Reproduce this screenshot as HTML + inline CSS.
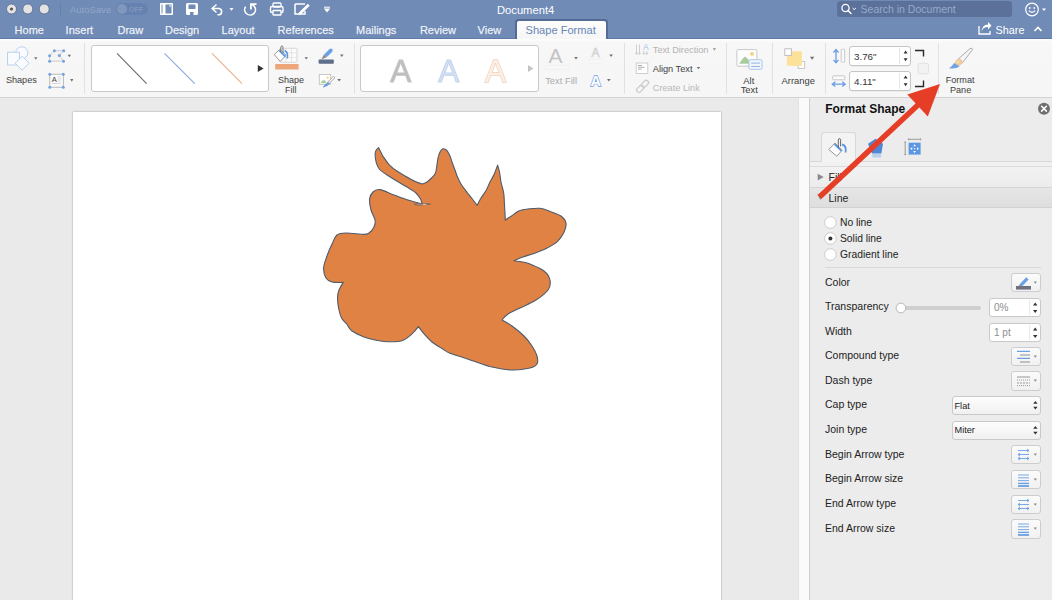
<!DOCTYPE html>
<html><head><meta charset="utf-8"><style>
html,body{margin:0;padding:0;width:1052px;height:600px;overflow:hidden;background:#fff}
body{position:relative;font-family:'Liberation Sans', sans-serif}
.t{position:absolute;white-space:nowrap;line-height:1;font-family:'Liberation Sans', sans-serif}
svg{overflow:visible}
</style></head><body>
<div style="position:absolute;left:0px;top:0px;width:1052px;height:39px;background:#708bb6"></div>
<div style="position:absolute;left:0px;top:38px;width:1052px;height:1px;background:#5f7aa6"></div>
<svg style="position:absolute;left:0;top:0" width="60" height="20">
<circle cx="11.5" cy="9" r="5" fill="#e3e3e3" stroke="#55698d" stroke-width="0.8"/>
<circle cx="11.5" cy="9" r="1.6" fill="#555"/>
<circle cx="27.8" cy="9" r="5" fill="#e3e3e3" stroke="#55698d" stroke-width="0.8"/>
<circle cx="44.2" cy="9" r="5" fill="#e3e3e3" stroke="#55698d" stroke-width="0.8"/>
</svg>
<div style="position:absolute;left:60px;top:3px;width:1px;height:12px;background:#647fab"></div>
<div class="t" style="left:70px;top:4.76px;font-size:9.5px;color:#93a7c8;font-weight:normal;">AutoSave</div>
<div style="position:absolute;left:116px;top:3px;width:32px;height:12px;background:#6682b0;border-radius:6px"></div>
<svg style="position:absolute;left:116px;top:3px" width="32" height="12"><circle cx="6" cy="6" r="5" fill="#8197bd"/><text x="13" y="9" font-family="Liberation Sans" font-weight="bold" font-size="7" fill="#8197bd">OFF</text></svg>
<svg style="position:absolute;left:150px;top:0" width="190" height="20">
<rect x="10" y="3" width="13" height="12" rx="1" fill="#fff"/>
<rect x="15.5" y="4.5" width="6" height="9" fill="#708bb6"/>
<path d="M19.5 4.5 L21.5 6.5 L19.5 6.5 Z" fill="#fff"/>
<rect x="11.5" y="4.5" width="1" height="9" fill="#708bb6"/>
<rect x="36" y="3" width="12" height="12" rx="1.5" fill="#fff"/>
<rect x="38.5" y="4.5" width="7" height="4.5" fill="#708bb6"/>
<rect x="40" y="12" width="3.5" height="3" fill="#708bb6"/>
<path d="M66 5 L62 8.5 L66 12 M62.5 8.5 H69 A3.2 3.2 0 0 1 69 14.8 H68" fill="none" stroke="#fff" stroke-width="1.6" stroke-linecap="round" stroke-linejoin="round"/>
<path d="M79.5 8 L83.5 8 L81.5 10.7 Z" fill="#fff"/>
<path d="M95.6 6.6 A5.4 5.4 0 1 0 104.4 6.4 L101.8 4.6" fill="none" stroke="#fff" stroke-width="1.6"/>
<path d="M106.5 4.2 H100.9 V9.6" fill="none" stroke="#fff" stroke-width="1.8"/>
<rect x="123" y="3" width="8" height="4" rx="1" fill="none" stroke="#fff" stroke-width="1.3"/>
<rect x="120.5" y="6.5" width="12.5" height="6" rx="1.5" fill="none" stroke="#fff" stroke-width="1.4"/>
<rect x="123" y="10.5" width="8" height="4.5" rx="0.5" fill="#708bb6" stroke="#fff" stroke-width="1.3"/>
<path d="M145 4 H155 M145 4 V14 H155 V11" fill="none" stroke="#fff" stroke-width="1.5"/>
<path d="M158.5 4.5 L150 13 L149 14.5 L150.5 13.5 L159 5" fill="none" stroke="#fff" stroke-width="2"/>
<rect x="174" y="6.7" width="6" height="1" fill="#fff"/>
<path d="M173.8 8.6 L180.2 8.6 L177 12.4 Z" fill="#fff"/>
</svg>
<div class="t" style="left:497px;top:4.54px;font-size:11.2px;color:#fff;font-weight:normal;">Document4</div>
<div class="t" style="left:14.6px;top:24.57px;font-size:11px;color:#f2f5fa;font-weight:normal;-webkit-text-stroke:0.25px rgba(242,245,250,.7)">Home</div>
<div class="t" style="left:65.6px;top:24.57px;font-size:11px;color:#f2f5fa;font-weight:normal;-webkit-text-stroke:0.25px rgba(242,245,250,.7)">Insert</div>
<div class="t" style="left:117.5px;top:24.57px;font-size:11px;color:#f2f5fa;font-weight:normal;-webkit-text-stroke:0.25px rgba(242,245,250,.7)">Draw</div>
<div class="t" style="left:165px;top:24.57px;font-size:11px;color:#f2f5fa;font-weight:normal;-webkit-text-stroke:0.25px rgba(242,245,250,.7)">Design</div>
<div class="t" style="left:221.6px;top:24.57px;font-size:11px;color:#f2f5fa;font-weight:normal;-webkit-text-stroke:0.25px rgba(242,245,250,.7)">Layout</div>
<div class="t" style="left:277.6px;top:24.57px;font-size:11px;color:#f2f5fa;font-weight:normal;-webkit-text-stroke:0.25px rgba(242,245,250,.7)">References</div>
<div class="t" style="left:356px;top:24.57px;font-size:11px;color:#f2f5fa;font-weight:normal;-webkit-text-stroke:0.25px rgba(242,245,250,.7)">Mailings</div>
<div class="t" style="left:419.9px;top:24.57px;font-size:11px;color:#f2f5fa;font-weight:normal;-webkit-text-stroke:0.25px rgba(242,245,250,.7)">Review</div>
<div class="t" style="left:477.6px;top:24.57px;font-size:11px;color:#f2f5fa;font-weight:normal;-webkit-text-stroke:0.25px rgba(242,245,250,.7)">View</div>
<div style="position:absolute;left:515px;top:19.4px;width:92.8px;height:19.6px;background:#536b95;border-radius:3.5px 3.5px 0 0"></div>
<div style="position:absolute;left:516.8px;top:21px;width:89px;height:18px;background:linear-gradient(#fdfdfd,#f6f6f6);border-radius:2px 2px 0 0"></div>
<div class="t" style="left:525.5px;top:24.56px;font-size:11.1px;color:#6886b6;font-weight:normal;">Shape Format</div>
<div style="position:absolute;left:837.3px;top:1.2px;width:175.2px;height:15.6px;background:#5b7199;border-radius:3.5px"></div>
<svg style="position:absolute;left:836px;top:0" width="30" height="20"><circle cx="9.5" cy="8" r="3.6" fill="none" stroke="#fff" stroke-width="1.3"/><path d="M12 10.5 L15 13.5" stroke="#fff" stroke-width="1.5" stroke-linecap="round"/><path d="M16.5 8 L18.2 9.6 L19.9 8" fill="none" stroke="#fff" stroke-width="1"/></svg>
<div class="t" style="left:860.6px;top:4.13px;font-size:10.5px;color:#98aacb;font-weight:normal;">Search in Document</div>
<svg style="position:absolute;left:1020px;top:0" width="32" height="20"><circle cx="12" cy="9.5" r="6.3" fill="none" stroke="#fff" stroke-width="1.2"/><circle cx="9.8" cy="8" r="0.9" fill="#fff"/><circle cx="14.2" cy="8" r="0.9" fill="#fff"/><path d="M8.8 10.7 Q12 14 15.2 10.7" fill="none" stroke="#fff" stroke-width="1.1"/><path d="M22 8.5 L26 8.5 L24 11 Z" fill="#fff"/></svg>
<svg style="position:absolute;left:970px;top:18px" width="82" height="20"><path d="M9 8 V16 H20 V13" fill="none" stroke="#fff" stroke-width="1.3"/><path d="M11.5 14 Q12.5 9 18 9 V11.5 L21.5 7.5 L18 4 V6.5 Q12 6.5 11.5 14 Z" fill="#fff"/><path d="M64.5 13 L68 9.5 L71.5 13" fill="none" stroke="#fff" stroke-width="1.6"/></svg>
<div class="t" style="left:995.6px;top:25.10px;font-size:10.8px;color:#fff;font-weight:normal;">Share</div>
<div style="position:absolute;left:0px;top:39px;width:1052px;height:58px;background:linear-gradient(#fefefe 0,#f7f7f7 3px,#f6f6f6)"></div>
<div style="position:absolute;left:0px;top:97px;width:1052px;height:1px;background:#d3d3d3"></div>
<div style="position:absolute;left:84px;top:43px;width:1px;height:51px;background:#e1e1e1"></div>
<div style="position:absolute;left:353.8px;top:43px;width:1px;height:51px;background:#e1e1e1"></div>
<div style="position:absolute;left:623.6px;top:43px;width:1px;height:51px;background:#e1e1e1"></div>
<div style="position:absolute;left:726.4px;top:43px;width:1px;height:51px;background:#e1e1e1"></div>
<div style="position:absolute;left:772px;top:43px;width:1px;height:51px;background:#e1e1e1"></div>
<div style="position:absolute;left:824.9px;top:43px;width:1px;height:51px;background:#e1e1e1"></div>
<div style="position:absolute;left:937.6px;top:43px;width:1px;height:51px;background:#e1e1e1"></div>
<svg style="position:absolute;left:0;top:42px" width="84" height="54">
<circle cx="21.8" cy="10.8" r="6" fill="#f9fbfe" stroke="#b3cbec" stroke-width="0.9"/>
<rect x="7.6" y="10.2" width="11.9" height="12.8" fill="#f9fbfe" stroke="#b3cbec" stroke-width="0.9"/>
<path d="M22.1 14.2 L29.1 21.2 L22.1 28.2 L15.1 21.2 Z" fill="#f9fbfe" stroke="#b3cbec" stroke-width="0.9"/>
<path d="M34.2 15.2 L37.4 15.2 L35.8 17.8 Z" fill="#707070"/>
<path d="M49.6 13.7 L54.4 8.7 L63.7 8.7 L59.4 13.4 L63.5 19.2 L49.6 19.2 Z" fill="#f4f4f4" stroke="#c4c4c4" stroke-width="0.8"/>
<g fill="#74a3e2"><circle cx="54.4" cy="8.7" r="1.5"/><circle cx="63.7" cy="8.7" r="1.5"/><circle cx="59.4" cy="13.4" r="1.5"/><circle cx="63.5" cy="19.2" r="1.5"/><circle cx="49.6" cy="19.2" r="1.5"/><circle cx="49.6" cy="13.7" r="1.5"/></g>
<path d="M67.6 12.8 L71 12.8 L69.3 15.2 Z" fill="#707070"/>
<rect x="49.8" y="32.2" width="13.5" height="13" fill="#fafafa" stroke="#a8a8a8" stroke-width="0.8"/>
<text x="51.8" y="39.6" font-family="Liberation Sans" font-size="7.6" fill="#444">A</text>
<path d="M57.5 35 H61 M57.5 37 H61 M57.5 39 H61 M52 41.5 H61" stroke="#c8c8c8" stroke-width="0.7"/>
<g fill="#74a3e2"><circle cx="49.8" cy="32.2" r="1.5"/><circle cx="63.3" cy="32.2" r="1.5"/><circle cx="49.8" cy="45.2" r="1.5"/><circle cx="63.3" cy="45.2" r="1.5"/></g>
<path d="M70.2 37 L73.4 37 L71.8 39.7 Z" fill="#707070"/>
</svg>
<div class="t" style="left:5.9px;top:76.02px;font-size:9.1px;color:#404040;font-weight:normal;">Shapes</div>
<div style="position:absolute;left:90.5px;top:45px;width:178px;height:47px;background:#fff;border:1px solid #c9c9c9;border-radius:3px;box-sizing:border-box"></div>
<svg style="position:absolute;left:0;top:0" width="300" height="100">
<path d="M117 53.4 L146.6 83.7" stroke="#6a6a6a" stroke-width="1.1"/>
<path d="M164.5 53.4 L194.8 83.7" stroke="#87a8e0" stroke-width="1.1"/>
<path d="M212 53.4 L242 83.7" stroke="#e9b08c" stroke-width="1.1"/>
<path d="M257.8 65 L263.6 68.5 L257.8 72 Z" fill="#333"/>
</svg>
<svg style="position:absolute;left:268px;top:42px" width="80" height="54">
<g stroke="#cfcfcf" stroke-width="0.8" fill="#fbfbfb"><rect x="12.6" y="6.3" width="16.4" height="14" rx="1"/></g>
<path d="M18 6.3 V20.3 M23.5 6.3 V20.3 M12.6 10.8 H29 M12.6 15.5 H29" stroke="#dcdcdc" stroke-width="0.7"/>
<path d="M6.3 12.6 L11.8 7.2 L18 13.4 L12.2 19.4 Z" fill="#fff" stroke="#8e8e8e" stroke-width="0.9" stroke-linejoin="round"/>
<path d="M11.2 8.6 L17.4 14.6" stroke="#5b97e3" stroke-width="1.7"/>
<path d="M12.8 10 V5.2 Q13.2 3.6 14.3 4 Q15.3 4.4 15 5.8 V11" fill="none" stroke="#666" stroke-width="0.9"/>
<path d="M16.5 8.5 Q20.5 10 19.3 16.5" stroke="#5b97e3" stroke-width="1.6" fill="none"/>
<rect x="7.2" y="22" width="23.4" height="5.5" fill="#eca67a"/>
<path d="M36.5 15.3 L40 15.3 L38.25 17.6 Z" fill="#707070"/>
<path d="M56 12.6 L61.4 7.2 Q63 6 64.2 7.2 Q65.2 8.6 64 9.9 L58.6 15.2 Z" fill="#6aa0e4"/>
<path d="M53.3 17.6 L56 12.6 L58.6 15.2 Z" fill="#8a8a8a"/>
<rect x="50.6" y="17.4" width="15.2" height="4.4" rx="0.8" fill="#5d6f89"/>
<path d="M72 12.6 L75.6 12.6 L73.8 15 Z" fill="#707070"/>
<rect x="51.3" y="32.4" width="11.4" height="9.9" fill="#fff" stroke="#bdbdbd" stroke-width="0.8"/>
<path d="M52.5 41.2 Q54 37.5 56.5 38 Q58 39.5 58.5 41.2 Z" fill="#abd09c"/>
<circle cx="59.6" cy="35.6" r="1.1" fill="#f3d46c"/>
<path d="M65.6 35.6 L60 41.2" stroke="#999" stroke-width="2.6" stroke-linecap="round"/>
<path d="M65.6 35.6 L60 41.2" stroke="#fafafa" stroke-width="1.4" stroke-linecap="round"/>
<path d="M60.6 40.3 L61.8 41.8 Q59 45 54.8 45.8 Q56 42.5 60.6 40.3 Z" fill="#5f9ae4"/>
<path d="M69.3 37 L73 37 L71.15 39.6 Z" fill="#707070"/>
</svg>
<div class="t" style="left:277.9px;top:76.13px;font-size:9.0px;color:#404040;font-weight:normal;">Shape</div>
<div class="t" style="left:285.1px;top:86.03px;font-size:9.0px;color:#404040;font-weight:normal;">Fill</div>
<div style="position:absolute;left:360.3px;top:45px;width:178.3px;height:47px;background:#fff;border:1px solid #c9c9c9;border-radius:3px;box-sizing:border-box"></div>
<svg style="position:absolute;left:0;top:0" width="620" height="100">
<text x="390.3" y="81.6" font-family="Liberation Sans" font-size="31.5" fill="#bdbdbd" stroke="#c4c4c4" stroke-width="1" style="filter:blur(0.5px)">A</text>
<text x="438.3" y="81.6" font-family="Liberation Sans" font-size="31.5" fill="#d6e2f3" stroke="#c5d5ee" stroke-width="1.1" style="filter:blur(0.4px)">A</text>
<text x="485" y="81.6" font-family="Liberation Sans" font-size="31.5" fill="#fcefe5" stroke="#f2cfb6" stroke-width="1.4" paint-order="stroke" style="filter:blur(0.4px)">A</text>
<path d="M528 65 L533.5 68.5 L528 72 Z" fill="#c4c4c4"/>
<text x="548.4" y="62.7" font-family="Liberation Sans" font-size="21" fill="#c4c4c4">A</text>
<rect x="545.4" y="65.4" width="23" height="4" rx="1" fill="#f8f8f8" stroke="#ececec" stroke-width="0.6"/>
<path d="M574.2 57.1 L577.8 57.1 L576 59.5 Z" fill="#707070"/>
<text x="591.5" y="57.3" font-family="Liberation Sans" font-size="12" fill="#fafafa" stroke="#d0d0d0" stroke-width="0.7">A</text>
<rect x="588.6" y="59.5" width="15" height="3.7" rx="1" fill="#f8f8f8" stroke="#ececec" stroke-width="0.6"/>
<path d="M609.3 54.6 L612.9 54.6 L611.1 56.9 Z" fill="#707070"/>
<text x="590.6" y="85.7" font-family="Liberation Sans" font-weight="bold" font-size="14.5" fill="#fff" stroke="#6a9de4" stroke-width="1.3" paint-order="stroke">A</text>
<path d="M607 79 L610.7 79 L608.85 81.6 Z" fill="#707070"/>
</svg>
<div class="t" style="left:545.2px;top:75.88px;font-size:9.4px;color:#ababab;font-weight:normal;">Text Fill</div>
<svg style="position:absolute;left:630px;top:42px" width="100" height="54">
<path d="M6.5 2.5 V12 M9.5 2.5 V12" stroke="#c4c4c4" stroke-width="0.8"/>
<path d="M5.3 10.8 L6.5 12.5 L7.7 10.8 M8.3 10.8 L9.5 12.5 L10.7 10.8 M12.5 10.8 L13.7 12.5 L14.9 10.8 M15.6 10.8 L16.8 12.5 L18 10.8" fill="none" stroke="#c4c4c4" stroke-width="0.7"/>
<path d="M13.7 9 V12.3 M16.8 9 V12.3" stroke="#c4c4c4" stroke-width="0.7"/>
<text x="13" y="8" font-family="Liberation Sans" font-size="8.5" fill="#a9c5ec">A</text>
<path d="M82.8 6.2 L86 6.2 L84.4 8.4 Z" fill="#8a8a8a"/>
<rect x="6.2" y="21" width="11.6" height="10.5" fill="#fff" stroke="#c4c4c4" stroke-width="0.8"/>
<path d="M8 23.5 H12 M8 25.3 H14.5 M8 27.1 H11.5" stroke="#9a9a9a" stroke-width="0.8"/>
<path d="M66.8 25 L70.1 25 L68.45 27.2 Z" fill="#707070"/>
<g fill="none" stroke="#cdcdcd" stroke-width="1.4"><rect x="11" y="39.5" width="8" height="4.6" rx="2.3" transform="rotate(-45 15 41.8)"/><rect x="6.2" y="44.5" width="8" height="4.6" rx="2.3" transform="rotate(-45 10.2 46.8)"/></g>
</svg>
<div class="t" style="left:652.8px;top:45.80px;font-size:9.2px;color:#b4b4b4;font-weight:normal;">Text Direction</div>
<div class="t" style="left:652.8px;top:64.80px;font-size:9.2px;color:#404040;font-weight:normal;">Align Text</div>
<div class="t" style="left:652.8px;top:83.80px;font-size:9.2px;color:#b9b9b9;font-weight:normal;">Create Link</div>
<svg style="position:absolute;left:730px;top:42px" width="100" height="54">
<rect x="6.9" y="7.6" width="20" height="16.6" rx="1" fill="#fdfdfd" stroke="#c9c9c9" stroke-width="1"/>
<path d="M9.2 21.8 Q12 16.5 15 14.4 Q17.5 16 19.5 19.5 L19.5 21.8 Z" fill="#a8cc9b"/>
<circle cx="22" cy="11.8" r="1.9" fill="#f5d26e"/>
<rect x="18.9" y="17.7" width="13.2" height="9.6" rx="1.5" fill="#f1f6fd" stroke="#a9c6ec" stroke-width="1"/>
<path d="M21.2 21.1 H30 M21.2 24.5 H30" stroke="#8fb4e6" stroke-width="1"/>
<rect x="68.1" y="19.6" width="6.6" height="6.8" fill="#fff" stroke="#c2c2c2" stroke-width="0.9"/>
<rect x="56.9" y="9.3" width="15" height="14.5" fill="#fbe19a"/>
<rect x="54.8" y="6.8" width="6.6" height="6.6" fill="#fff" stroke="#b9b9b9" stroke-width="0.9"/>
<path d="M80 14.8 L84.3 14.8 L82.15 17.8 Z" fill="#707070"/>
</svg>
<div class="t" style="left:743.3px;top:75.58px;font-size:9.4px;color:#404040;font-weight:normal;">Alt</div>
<div class="t" style="left:740.7px;top:85.18px;font-size:9.4px;color:#404040;font-weight:normal;">Text</div>
<div class="t" style="left:781.6px;top:75.58px;font-size:9.4px;color:#404040;font-weight:normal;">Arrange</div>
<svg style="position:absolute;left:824px;top:42px" width="130" height="54">
<path d="M12 8 V20.3 M9.5 10.5 L12 7.5 L14.5 10.5 M9.5 17.8 L12 20.8 L14.5 17.8" fill="none" stroke="#6a9de4" stroke-width="1.3"/>
<rect x="17.2" y="7.3" width="3.5" height="13" rx="1" fill="#fafafa" stroke="#bdbdbd" stroke-width="0.8"/>
<rect x="8.6" y="33.8" width="12.3" height="4" rx="1" fill="#fafafa" stroke="#bdbdbd" stroke-width="0.8"/>
<path d="M8.5 42.2 H21 M11.3 39.8 L8.3 42.2 L11.3 44.6 M18.2 39.8 L21.2 42.2 L18.2 44.6" fill="none" stroke="#6a9de4" stroke-width="1.3"/>
<path d="M91 8.5 H99.5 V14.5 M91 44.5 H99.5 V38.5" fill="none" stroke="#2a2a2a" stroke-width="1.4"/>
<rect x="94" y="21.3" width="10.5" height="10.5" rx="2" fill="#f2f2f2" stroke="#dcdcdc" stroke-width="0.8"/>
</svg>
<div style="position:absolute;left:849.3px;top:46.4px;width:62.2px;height:19.6px;background:#fff;border:1px solid #c6c6c6;border-radius:3px;box-sizing:border-box;box-shadow:0 0.5px 0.5px rgba(0,0,0,.08)"></div>
<div style="position:absolute;left:899.4px;top:48.4px;width:1px;height:15.6px;background:#e6e6e6"></div>
<svg style="position:absolute;left:900px;top:46.4px" width="12" height="20"><path d="M3.6 7.5 L5.6 4.6 L7.6 7.5 Z M3.6 12.3 L5.6 15.2 L7.6 12.3 Z" fill="#333"/></svg>
<div style="position:absolute;left:849.3px;top:71px;width:62.2px;height:19.6px;background:#fff;border:1px solid #c6c6c6;border-radius:3px;box-sizing:border-box;box-shadow:0 0.5px 0.5px rgba(0,0,0,.08)"></div>
<div style="position:absolute;left:899.4px;top:73px;width:1px;height:15.6px;background:#e6e6e6"></div>
<svg style="position:absolute;left:900px;top:71px" width="12" height="20"><path d="M3.6 7.5 L5.6 4.6 L7.6 7.5 Z M3.6 12.3 L5.6 15.2 L7.6 12.3 Z" fill="#333"/></svg>
<div class="t" style="left:854px;top:52.13px;font-size:9.8px;color:#333;font-weight:normal;">3.76"</div>
<div class="t" style="left:854px;top:76.73px;font-size:9.8px;color:#333;font-weight:normal;">4.11"</div>
<svg style="position:absolute;left:940px;top:42px" width="40" height="30">
<path d="M16.3 18.7 L30 6.6 Q32.6 5.2 32.4 7.8 L21.8 21.6 Z" fill="#f5f5f5" stroke="#9c9c9c" stroke-width="0.8" stroke-linejoin="round"/>
<ellipse cx="18.6" cy="20.6" rx="4" ry="3.2" transform="rotate(-40 18.6 20.6)" fill="#f0c79e"/>
<ellipse cx="18" cy="20" rx="2" ry="1.4" transform="rotate(-40 18 20)" fill="#f5e09a"/>
<path d="M14.2 21 Q12 24.5 9 26.2 Q15.5 27.5 19.5 24.5 Z" fill="#6fa3e6"/>
</svg>
<div class="t" style="left:945.7px;top:76.42px;font-size:9.1px;color:#404040;font-weight:normal;">Format</div>
<div class="t" style="left:950px;top:85.62px;font-size:9.1px;color:#404040;font-weight:normal;">Pane</div>
<div style="position:absolute;left:0px;top:98px;width:798px;height:502px;background:#eaeaea"></div>
<div style="position:absolute;left:73px;top:112px;width:648px;height:488px;background:#fff;box-shadow:0 0 0 0.5px rgba(0,0,0,.08),0 0 2px rgba(0,0,0,.22)"></div>
<div style="position:absolute;left:798px;top:98px;width:11px;height:502px;background:#fafafa;box-shadow:inset 1px 0 0 #e2e2e2"></div>
<div style="position:absolute;left:809px;top:98px;width:1px;height:502px;background:#cfcfcf"></div>
<div style="position:absolute;left:810px;top:98px;width:242px;height:502px;background:#ececec"></div>
<svg style="position:absolute;left:0;top:0" width="1052" height="600"><path d="M378.5 147.6 C378.5 147.6 379.8 150.2 380.5 151.5 C381.2 152.8 381.8 154.3 382.5 155.5 C383.2 156.7 383.5 157.1 384.7 158.7 C385.9 160.3 387.6 163.2 389.7 165.3 C391.8 167.4 394.6 169.4 397.2 171.2 C399.8 173.0 402.6 174.5 405.5 176.2 C408.4 177.9 411.9 179.9 414.7 181.2 C417.5 182.5 422.4 184.1 422.4 184.1 C422.4 184.1 425.5 183.0 427.0 182.0 C428.5 181.0 430.1 179.4 431.5 178.0 C432.9 176.6 434.4 175.5 435.3 173.5 C436.2 171.5 436.4 168.6 436.8 166.0 C437.2 163.4 437.5 160.3 438.0 158.0 C438.5 155.7 439.2 153.5 440.0 152.0 C440.8 150.5 442.0 149.2 442.9 148.8 C443.8 148.4 444.7 149.1 445.5 149.5 C446.3 149.9 446.8 150.3 447.5 151.4 C448.2 152.5 449.2 154.2 450.0 156.0 C450.8 157.8 451.2 159.7 452.0 162.0 C452.8 164.3 454.1 167.6 455.0 170.0 C455.9 172.4 456.3 174.2 457.3 176.5 C458.3 178.8 459.5 181.5 461.0 184.0 C462.5 186.5 464.7 189.3 466.5 191.7 C468.3 194.1 470.2 196.2 472.0 198.5 C473.8 200.8 477.1 205.4 477.1 205.4 C477.1 205.4 479.5 200.5 481.0 198.0 C482.5 195.5 484.7 192.9 486.2 190.2 C487.7 187.5 488.7 184.5 490.0 182.0 C491.3 179.5 492.5 177.8 493.8 175.0 C495.1 172.2 497.6 165.1 497.6 165.1 C497.6 165.1 498.9 169.2 499.5 172.0 C500.1 174.8 500.3 178.5 501.0 182.0 C501.7 185.5 503.1 189.4 503.7 193.2 C504.3 197.0 504.2 200.5 504.5 205.0 C504.8 209.5 505.3 220.3 505.3 220.3 C505.3 220.3 507.9 218.3 509.0 217.5 C510.1 216.7 510.4 216.8 512.0 215.7 C513.6 214.6 516.0 212.1 518.7 211.0 C521.4 209.9 524.5 209.4 528.0 209.0 C531.5 208.6 536.2 207.9 540.0 208.3 C543.8 208.8 547.2 210.4 550.7 211.7 C554.2 213.0 558.8 214.4 561.3 216.3 C563.8 218.2 565.5 220.3 566.0 223.0 C566.5 225.7 565.5 229.2 564.0 232.3 C562.5 235.4 560.2 239.0 557.3 241.7 C554.4 244.4 550.7 246.3 546.7 248.3 C542.7 250.3 537.3 252.2 533.3 253.7 C529.3 255.1 525.9 255.8 522.7 257.0 C519.5 258.2 514.0 260.8 514.0 260.8 C514.0 260.8 520.0 261.5 522.7 262.0 C525.4 262.5 526.5 262.5 530.0 264.0 C533.5 265.5 540.7 268.3 544.0 271.0 C547.3 273.7 549.3 276.8 550.0 280.0 C550.7 283.2 550.3 286.7 548.0 290.0 C545.7 293.3 540.7 297.0 536.0 300.0 C531.3 303.0 524.7 305.7 520.0 308.0 C515.3 310.3 511.0 312.0 508.0 314.0 C505.0 316.0 502.0 320.0 502.0 320.0 C502.0 320.0 508.3 323.3 512.0 326.0 C515.7 328.7 520.7 332.7 524.0 336.0 C527.3 339.3 529.8 342.7 532.0 346.0 C534.2 349.3 536.2 353.0 537.0 356.0 C537.8 359.0 538.2 362.0 537.0 364.0 C535.8 366.0 534.2 367.0 530.0 368.0 C525.8 369.0 518.3 370.2 512.0 370.0 C505.7 369.8 498.2 368.4 492.0 367.0 C485.8 365.6 479.9 363.1 475.0 361.5 C470.1 359.9 466.5 358.6 462.3 357.2 C458.1 355.8 453.4 354.8 450.0 353.3 C446.6 351.8 444.8 350.2 441.7 348.3 C438.6 346.4 434.5 343.9 431.7 341.7 C428.9 339.5 427.2 337.5 425.0 335.0 C422.8 332.5 418.4 326.7 418.4 326.7 C418.4 326.7 414.5 331.8 411.7 334.2 C408.9 336.6 405.9 339.6 401.7 340.8 C397.5 342.1 391.1 341.8 386.7 341.7 C382.2 341.6 378.9 340.8 375.0 340.0 C371.1 339.2 367.2 338.2 363.3 336.7 C359.4 335.2 354.5 332.9 351.7 330.8 C348.9 328.7 348.4 326.1 346.7 324.0 C345.0 321.9 343.0 320.6 341.7 318.3 C340.4 316.0 339.7 313.3 339.0 310.0 C338.3 306.7 337.5 301.6 337.5 298.3 C337.5 295.0 338.0 292.6 339.0 290.0 C340.0 287.4 343.3 282.4 343.3 282.4 C343.3 282.4 334.9 282.7 332.0 282.0 C329.1 281.3 327.4 280.3 326.0 278.0 C324.6 275.7 323.4 271.7 323.6 268.0 C323.8 264.3 325.6 260.0 327.0 256.0 C328.4 252.0 330.3 247.5 332.0 244.0 C333.7 240.5 334.7 236.8 337.0 235.0 C339.3 233.2 341.5 233.1 346.0 233.0 C350.5 232.9 360.2 234.4 364.0 234.4 C367.8 234.4 367.3 234.2 369.0 233.0 C370.7 231.8 373.0 229.2 374.0 227.0 C375.0 224.8 375.5 222.8 375.0 220.0 C374.5 217.2 371.9 213.5 371.0 210.0 C370.1 206.5 369.3 202.0 369.6 199.0 C369.9 196.0 371.3 193.6 373.0 192.0 C374.7 190.4 376.5 189.1 380.0 189.6 C383.5 190.1 389.3 193.3 394.0 195.0 C398.7 196.7 403.3 198.5 408.0 200.0 C412.7 201.5 422.0 204.0 422.0 204.0 C422.0 204.0 421.6 200.9 420.5 199.0 C419.4 197.1 417.3 194.2 415.5 192.5 C413.7 190.8 412.1 190.2 409.7 188.7 C407.3 187.2 404.1 185.4 401.3 183.7 C398.5 182.0 395.5 180.2 393.0 178.7 C390.5 177.2 388.5 176.0 386.3 174.5 C384.1 173.0 381.4 171.4 379.7 169.5 C378.0 167.6 377.1 165.3 376.3 162.8 C375.5 160.3 375.2 156.6 375.1 154.5 C375.1 152.4 375.4 151.7 376.0 150.5 C376.6 149.3 378.5 147.6 378.5 147.6Z" fill="#e08243" stroke="#4f5b6b" stroke-width="1.1" stroke-linejoin="round"/>
<path d="M414.2 204.3 Q418 205.8 421.5 205 Q426 204 430.5 204.2 Q425 203.3 421 203.6 Q417 203.6 414.2 204.3 Z" fill="#d99a78" stroke="#55606e" stroke-width="0.7"/><ellipse cx="424.5" cy="204.2" rx="2" ry="0.5" fill="#f3d3c4"/></svg>
<div class="t" style="left:825.2px;top:102.94px;font-size:12px;color:#111;font-weight:bold;">Format Shape</div>
<svg style="position:absolute;left:1030px;top:95px" width="22" height="28"><circle cx="14" cy="13.7" r="6" fill="#6f6f6f"/><path d="M11.6 11.3 L16.4 16.1 M16.4 11.3 L11.6 16.1" stroke="#fff" stroke-width="1.5" stroke-linecap="round"/></svg>
<div style="position:absolute;left:810px;top:161px;width:242px;height:1px;background:#d6d6d6"></div>
<div style="position:absolute;left:820.5px;top:132px;width:35.2px;height:30px;background:#f3f3f3;border:1px solid #d8d8d8;border-bottom:none;border-radius:3px 3px 0 0;box-sizing:border-box"></div>
<div style="position:absolute;left:810px;top:162px;width:242px;height:4px;background:#f1f1f1"></div>
<div style="position:absolute;left:810px;top:166px;width:242px;height:21px;background:linear-gradient(#f2f2f2,#ececec)"></div>
<div style="position:absolute;left:810px;top:166px;width:242px;height:1px;background:#dcdcdc"></div>
<div style="position:absolute;left:810px;top:187px;width:242px;height:1px;background:#d5d5d5"></div>
<div style="position:absolute;left:810px;top:188px;width:242px;height:19px;background:linear-gradient(#e6e6e6,#dedede)"></div>
<div style="position:absolute;left:810px;top:207px;width:242px;height:1px;background:#d2d2d2"></div>
<svg style="position:absolute;left:810px;top:130px" width="120" height="80">
<path d="M7.7 43.7 L13.7 47.1 L7.7 50.5 Z" fill="#8a8a8a"/>
<path d="M7.3 64.3 L13.3 64.3 L10.3 70 Z" fill="#8a8a8a"/>
<path d="M18.8 19.5 L25 13 L32 20.3 L26.8 26.2 Z" fill="#fff" stroke="#8a8a8a" stroke-width="0.9" stroke-linejoin="round"/>
<path d="M24.5 14.2 L31.4 20.8" stroke="#5b97e3" stroke-width="1.8"/>
<path d="M28.3 17.5 V10.2 Q28.6 8.3 29.8 8.6 Q31 9 30.6 10.5 V16.5" fill="none" stroke="#555" stroke-width="0.9"/>
<path d="M32 14.5 Q36.8 15.5 35.5 22.5" fill="none" stroke="#5b97e3" stroke-width="1.8"/>
<path d="M58 13.8 L65.6 8.7 L73 13.8 L71.3 23.5 L62.1 23.5 Z" fill="#4f87d6"/>
<path d="M62.1 24 L71.3 24 L70.8 27.5 L62.6 27.5 Z" fill="#a9c6ee" opacity="0.75"/>
<path d="M98.6 9.3 H110.6 M98.6 8.3 V10.3 M110.6 8.3 V10.3" stroke="#888" stroke-width="0.8"/>
<path d="M95.2 12.1 V24.6 M94.2 12.1 H96.2 M94.2 24.6 H96.2" stroke="#888" stroke-width="0.8"/>
<rect x="98.6" y="12.7" width="12" height="11.9" fill="#5b97e3"/>
<g fill="#fff"><path d="M104.6 14.3 L106 16.3 L103.2 16.3 Z M104.6 23 L106 21 L103.2 21 Z M100.2 18.65 L102.2 17.25 L102.2 20.05 Z M109 18.65 L107 17.25 L107 20.05 Z"/><circle cx="104.6" cy="18.65" r="0.7"/></g>
</svg>
<div class="t" style="left:828.5px;top:171.63px;font-size:10.5px;color:#222;font-weight:normal;">Fill</div>
<div class="t" style="left:828.5px;top:192.63px;font-size:10.5px;color:#222;font-weight:normal;">Line</div>
<svg style="position:absolute;left:810px;top:210px" width="40" height="60">
<g fill="#fff" stroke="#c2c2c2" stroke-width="0.8"><circle cx="20.4" cy="12.5" r="5.8"/><circle cx="20.4" cy="28.4" r="5.8"/><circle cx="20.4" cy="44.5" r="5.8"/></g>
<circle cx="20.4" cy="28.4" r="2" fill="#333"/>
</svg>
<div class="t" style="left:840px;top:218.26px;font-size:10.3px;color:#222;font-weight:normal;">No line</div>
<div class="t" style="left:840px;top:234.26px;font-size:10.3px;color:#222;font-weight:normal;">Solid line</div>
<div class="t" style="left:840px;top:250.26px;font-size:10.3px;color:#222;font-weight:normal;">Gradient line</div>
<div style="position:absolute;left:825px;top:267.2px;width:216px;height:1px;background:#d8d8d8"></div>
<div class="t" style="left:825px;top:276.63px;font-size:10.5px;color:#222;font-weight:normal;">Color</div>
<div class="t" style="left:825px;top:301.44px;font-size:10.5px;color:#222;font-weight:normal;">Transparency</div>
<div class="t" style="left:825px;top:326.33px;font-size:10.5px;color:#222;font-weight:normal;">Width</div>
<div class="t" style="left:825px;top:350.44px;font-size:10.5px;color:#222;font-weight:normal;">Compound type</div>
<div class="t" style="left:825px;top:374.63px;font-size:10.5px;color:#222;font-weight:normal;">Dash type</div>
<div class="t" style="left:825px;top:399.24px;font-size:10.5px;color:#222;font-weight:normal;">Cap type</div>
<div class="t" style="left:825px;top:424.03px;font-size:10.5px;color:#222;font-weight:normal;">Join type</div>
<div class="t" style="left:825px;top:449.03px;font-size:10.5px;color:#222;font-weight:normal;">Begin Arrow type</div>
<div class="t" style="left:825px;top:473.13px;font-size:10.5px;color:#222;font-weight:normal;">Begin Arrow size</div>
<div class="t" style="left:825px;top:498.03px;font-size:10.5px;color:#222;font-weight:normal;">End Arrow type</div>
<div class="t" style="left:825px;top:522.63px;font-size:10.5px;color:#222;font-weight:normal;">End Arrow size</div>
<div style="position:absolute;left:1011.3px;top:273.3px;width:29.9px;height:19.2px;background:linear-gradient(#fbfbfb,#f1f1f1);border:1px solid #cdcdcd;border-radius:3px;box-sizing:border-box"></div>
<svg style="position:absolute;left:1030px;top:273.3px" width="12" height="20"><path d="M3.6 8.5 L7 8.5 L5.3 10.8 Z" fill="#8d8d8d"/></svg>
<svg style="position:absolute;left:1011px;top:273px" width="22" height="20"><path d="M8.6 11.3 L15.3 4.3 L17.6 6.6 L10.9 13.6 Z" fill="#6aa0e4"/><path d="M7.5 14.2 L8.6 11.3 L10.9 13.6 Z" fill="#8a8a8a"/><rect x="5" y="13" width="15" height="3.6" fill="#6e727c"/></svg>
<div style="position:absolute;left:900px;top:306px;width:81.4px;height:4px;background:#cfcfcf;border-radius:2px"></div>
<svg style="position:absolute;left:890px;top:298px" width="20" height="20"><circle cx="10.9" cy="10" r="4.8" fill="#fff" stroke="#a9a9a9" stroke-width="0.8"/></svg>
<div style="position:absolute;left:989px;top:297.5px;width:52.2px;height:19.5px;background:#fff;border:1px solid #c9c9c9;border-radius:3px;box-sizing:border-box"></div>
<div style="position:absolute;left:1029px;top:299.5px;width:1px;height:15.5px;background:#e8e8e8"></div>
<svg style="position:absolute;left:1029px;top:297.5px" width="12" height="20"><path d="M4 7.6 L6.2 4.6 L8.4 7.6 Z M4 12 L6.2 15 L8.4 12 Z" fill="#333"/></svg>
<div class="t" style="left:994px;top:303.20px;font-size:10px;color:#8d8d8d;font-weight:normal;">0%</div>
<div style="position:absolute;left:989px;top:322.6px;width:52.2px;height:19.5px;background:#fff;border:1px solid #c9c9c9;border-radius:3px;box-sizing:border-box"></div>
<div style="position:absolute;left:1029px;top:324.6px;width:1px;height:15.5px;background:#e8e8e8"></div>
<svg style="position:absolute;left:1029px;top:322.6px" width="12" height="20"><path d="M4 7.6 L6.2 4.6 L8.4 7.6 Z M4 12 L6.2 15 L8.4 12 Z" fill="#333"/></svg>
<div class="t" style="left:994px;top:328.30px;font-size:10px;color:#8d8d8d;font-weight:normal;">1 pt</div>
<div style="position:absolute;left:1011.3px;top:347.2px;width:29.9px;height:19.2px;background:linear-gradient(#fbfbfb,#f1f1f1);border:1px solid #cdcdcd;border-radius:3px;box-sizing:border-box"></div>
<svg style="position:absolute;left:1030px;top:347.2px" width="12" height="20"><path d="M3.6 8.5 L7 8.5 L5.3 10.8 Z" fill="#8d8d8d"/></svg>
<svg style="position:absolute;left:1011px;top:347px" width="22" height="20"><path d="M6 4.3 H19 M6 11.4 H19" stroke="#6aa0e4" stroke-width="1.2"/><path d="M9 8 H19 M9 15 H19" stroke="#8d8d8d" stroke-width="1"/></svg>
<div style="position:absolute;left:1011.3px;top:371.4px;width:29.9px;height:19.2px;background:linear-gradient(#fbfbfb,#f1f1f1);border:1px solid #cdcdcd;border-radius:3px;box-sizing:border-box"></div>
<svg style="position:absolute;left:1030px;top:371.4px" width="12" height="20"><path d="M3.6 8.5 L7 8.5 L5.3 10.8 Z" fill="#8d8d8d"/></svg>
<svg style="position:absolute;left:1011px;top:371px" width="22" height="20"><path d="M6 6 H19" stroke="#8d8d8d" stroke-width="0.9"/><path d="M6 9 H19" stroke="#8d8d8d" stroke-width="0.9" stroke-dasharray="1 1"/><path d="M6 12 H19" stroke="#8d8d8d" stroke-width="0.9" stroke-dasharray="2 1"/><path d="M6 14.6 H19" stroke="#8d8d8d" stroke-width="0.9" stroke-dasharray="1 1"/></svg>
<div style="position:absolute;left:951.5px;top:396.2px;width:89.2px;height:18.8px;background:linear-gradient(#fdfdfd,#f0f0f0);border:1px solid #c9c9c9;border-radius:3px;box-sizing:border-box"></div>
<svg style="position:absolute;left:1029px;top:396.2px" width="12" height="20"><path d="M4.2 7.8 L6.4 5 L8.6 7.8 Z M4.2 10.7 L6.4 13.5 L8.6 10.7 Z" fill="#333"/></svg>
<div class="t" style="left:954.5px;top:401.50px;font-size:9.2px;color:#222;font-weight:normal;">Flat</div>
<div style="position:absolute;left:951.5px;top:420.8px;width:89.2px;height:18.8px;background:linear-gradient(#fdfdfd,#f0f0f0);border:1px solid #c9c9c9;border-radius:3px;box-sizing:border-box"></div>
<svg style="position:absolute;left:1029px;top:420.8px" width="12" height="20"><path d="M4.2 7.8 L6.4 5 L8.6 7.8 Z M4.2 10.7 L6.4 13.5 L8.6 10.7 Z" fill="#333"/></svg>
<div class="t" style="left:954.5px;top:426.10px;font-size:9.2px;color:#222;font-weight:normal;">Miter</div>
<div style="position:absolute;left:1011.3px;top:445px;width:29.9px;height:19.2px;background:linear-gradient(#fbfbfb,#f1f1f1);border:1px solid #cdcdcd;border-radius:3px;box-sizing:border-box"></div>
<svg style="position:absolute;left:1030px;top:445px" width="12" height="20"><path d="M3.6 8.5 L7 8.5 L5.3 10.8 Z" fill="#8d8d8d"/></svg>
<svg style="position:absolute;left:1011px;top:445px" width="22" height="20"><g stroke="#6aa0e4" stroke-width="0.9" fill="none"><path d="M7 5.5 H18 M16 4 L18 5.5 L16 7 M7 9.5 H18 M9 8 L7 9.5 L9 11 M7 13.5 H18 M9 12 L7 13.5 L9 15 M16 12 L18 13.5 L16 15"/></g></svg>
<div style="position:absolute;left:1011.3px;top:470px;width:29.9px;height:19.2px;background:linear-gradient(#fbfbfb,#f1f1f1);border:1px solid #cdcdcd;border-radius:3px;box-sizing:border-box"></div>
<svg style="position:absolute;left:1030px;top:470px" width="12" height="20"><path d="M3.6 8.5 L7 8.5 L5.3 10.8 Z" fill="#8d8d8d"/></svg>
<svg style="position:absolute;left:1011px;top:470px" width="22" height="20"><g stroke="#6aa0e4" fill="none"><path d="M7 5 H18 M7 7.8 H18 M7 10.6 H18" stroke-width="0.9"/><path d="M7 13.4 H18" stroke-width="1.4"/><path d="M7 16 H18" stroke-width="1.8"/></g></svg>
<div style="position:absolute;left:1011.3px;top:494.5px;width:29.9px;height:19.2px;background:linear-gradient(#fbfbfb,#f1f1f1);border:1px solid #cdcdcd;border-radius:3px;box-sizing:border-box"></div>
<svg style="position:absolute;left:1030px;top:494.5px" width="12" height="20"><path d="M3.6 8.5 L7 8.5 L5.3 10.8 Z" fill="#8d8d8d"/></svg>
<svg style="position:absolute;left:1011px;top:494.5px" width="22" height="20"><g stroke="#6aa0e4" stroke-width="0.9" fill="none"><path d="M7 5.5 H18 M16 4 L18 5.5 L16 7 M7 9.5 H18 M9 8 L7 9.5 L9 11 M7 13.5 H18 M9 12 L7 13.5 L9 15 M16 12 L18 13.5 L16 15"/></g></svg>
<div style="position:absolute;left:1011.3px;top:519.4px;width:29.9px;height:19.2px;background:linear-gradient(#fbfbfb,#f1f1f1);border:1px solid #cdcdcd;border-radius:3px;box-sizing:border-box"></div>
<svg style="position:absolute;left:1030px;top:519.4px" width="12" height="20"><path d="M3.6 8.5 L7 8.5 L5.3 10.8 Z" fill="#8d8d8d"/></svg>
<svg style="position:absolute;left:1011px;top:519.4px" width="22" height="20"><g stroke="#6aa0e4" fill="none"><path d="M7 5 H18 M7 7.8 H18 M7 10.6 H18" stroke-width="0.9"/><path d="M7 13.4 H18" stroke-width="1.4"/><path d="M7 16 H18" stroke-width="1.8"/></g></svg>
<svg style="position:absolute;left:0;top:0" width="1052" height="600"><path d="M819.5 197 L919 104" stroke="#e63d26" stroke-width="5.5"/><path d="M940 84 L907.3 94.5 L927.8 116.6 Z" fill="#e63d26"/></svg>
</body></html>
